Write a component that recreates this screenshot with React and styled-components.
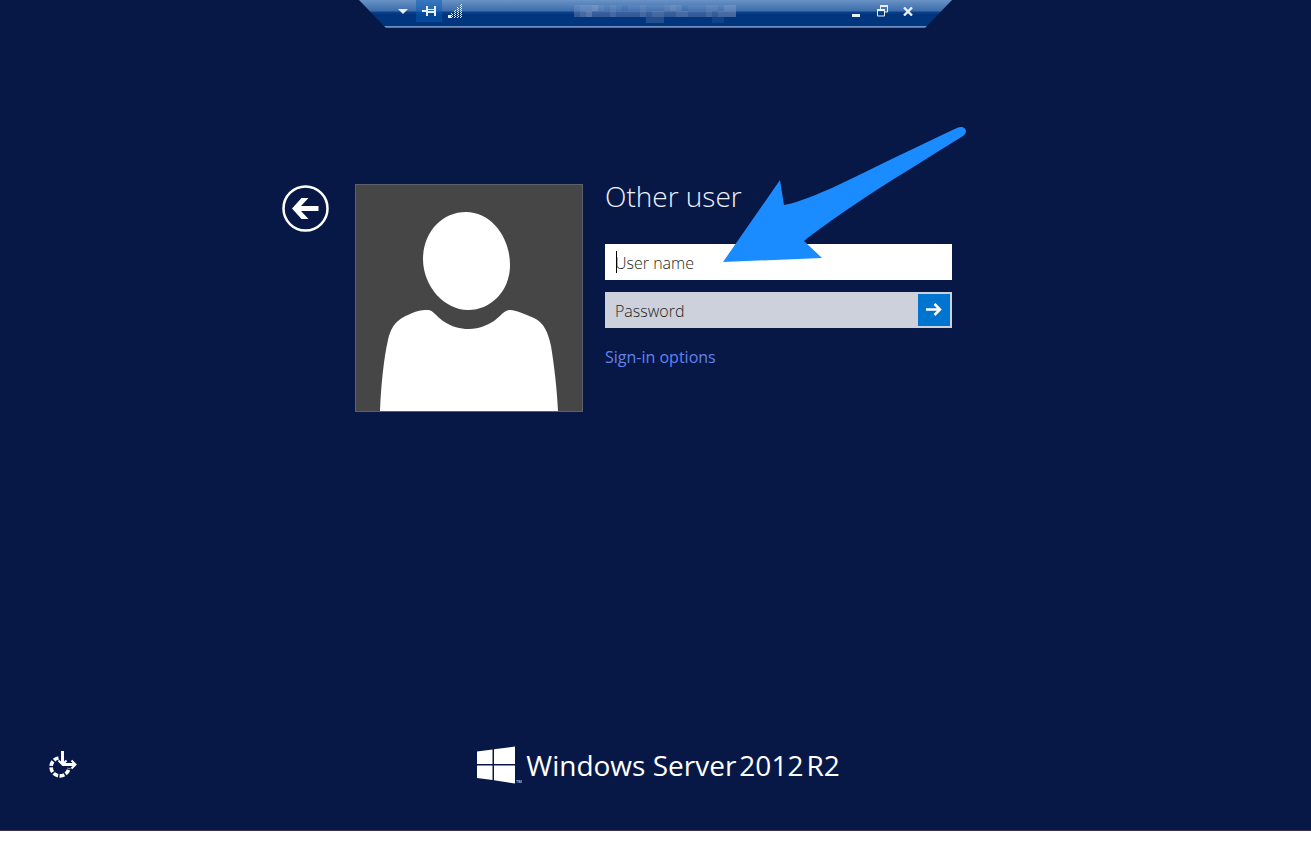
import React from 'react';
import styled, { createGlobalStyle } from 'styled-components';

const GlobalStyle = createGlobalStyle`
  * {
    box-sizing: border-box;
  }

  body {
    margin: 0;
    background: #fff;
    font-family: 'Open Sans', 'Noto Sans', sans-serif;
  }
`;

const Desktop = styled.div`
  display: flex;
  flex-direction: column;
  min-height: calc(100vh - 23px);
  margin-bottom: 23px;
  background: #071846;
  border-bottom: 1px solid #3a3558;
`;

const ConnectionBar = styled.header`
  display: grid;
  grid-template-columns: 1fr auto 1fr;
  align-items: start;
  align-self: center;
  width: 593px;
  max-width: 100%;
  height: 28px;
  padding: 0 31px 0 31px;
  background: linear-gradient(#6a93c6 0, #3c6cab 11px, #0b418b 12px, #01347c 15px, #01377f 26px, #7d9cc8 26px, #45659c 28px);
  clip-path: polygon(0 0, 100% 0, calc(100% - 27px) 100%, 27px 100%);
`;

const BarGroup = styled.div`
  display: flex;
  justify-content: ${props => (props.$end ? 'flex-end' : 'flex-start')};
`;

const BarButton = styled.button`
  display: flex;
  align-items: center;
  justify-content: center;
  width: 26px;
  height: 22px;
  padding: 0;
  border: 0;
  color: #e6effa;
  background: ${props => (props.$active ? 'rgba(8, 92, 184, 0.5)' : 'transparent')};
`;

const Mosaic = styled.svg`
  display: block;
  margin: 5px 0 0 4px;
`;

const Login = styled.main`
  display: flex;
  justify-content: center;
  align-items: flex-start;
  padding: 156px 77px 0 0;
`;

const BackButton = styled.button`
  flex: none;
  width: 48px;
  height: 48px;
  margin-right: 25px;
  padding: 0;
  border: 0;
  background: none;
`;

const Avatar = styled.svg`
  flex: none;
  width: 228px;
  height: 228px;
  margin-right: 22px;
  border: 1px solid #5c6068;
  background: #464646;
`;

const Form = styled.form`
  position: relative;
  display: flex;
  flex-direction: column;
  align-items: stretch;
  gap: 12px;
  width: 347px;
`;

const Title = styled.h1`
  margin: 0 0 24px;
  color: #eef1f8;
  font-size: 28px;
  font-weight: 300;
  line-height: 24px;
`;

const Field = styled.div`
  position: relative;
  display: flex;
  height: 36px;
  padding: 2px;
  background: ${props => (props.$focused ? '#fff' : '#cdd1dc')};
`;

const TextBox = styled.input`
  flex: 1;
  min-width: 0;
  padding: 2px 8px 0;
  border: 0;
  outline: 0;
  color: #333;
  background: transparent;
  font-family: inherit;
  font-size: 16px;
  font-weight: 300;

  &::placeholder {
    color: #1c1e24;
    opacity: 1;
  }
`;

const Caret = styled.span`
  position: absolute;
  top: 7px;
  left: 11px;
  width: 1px;
  height: 22px;
  background: #000;
`;

const SubmitButton = styled.button`
  display: flex;
  align-items: center;
  justify-content: center;
  width: 32px;
  padding: 0;
  border: 0;
  background: #0075cf;
`;

const OptionsLink = styled.a`
  align-self: flex-start;
  margin-top: 5px;
  color: #6283ee;
  font-size: 16px;
  line-height: 24px;
  text-decoration: none;
`;

const Pointer = styled.svg`
  position: absolute;
  top: -60px;
  left: 115px;
  pointer-events: none;
`;

const Footer = styled.footer`
  display: grid;
  grid-template-columns: 1fr auto 1fr;
  align-items: center;
  margin-top: auto;
  padding: 0 48px 45px;
`;

const EaseButton = styled.button`
  display: flex;
  justify-self: start;
  padding: 0;
  border: 0;
  background: none;
`;

const Brand = styled.div`
  display: flex;
  align-items: center;
  padding-left: 6px;
  color: #fff;
`;

const BrandName = styled.div`
  display: flex;
  gap: 3px;
  margin-left: 4px;
  font-size: 28px;
  line-height: 40px;
  white-space: nowrap;
`;

// one digit per 6px block, brightness 0-9
const mosaicRows = [
  '2334212101121112320111221330',
  '3453334333343443344333434440',
  '0000000000002220000000011000',
];

const HiddenHost = () => (
  <Mosaic width="168" height="18" aria-hidden="true" shapeRendering="crispEdges">
    {mosaicRows.map((row, y) =>
      row.split('').map((level, x) => (
        <rect
          key={`${x}-${y}`}
          x={x * 6}
          y={y * 6}
          width="6"
          height="6"
          fill="#a9b4d4"
          opacity={level * 0.1}
        />
      ))
    )}
  </Mosaic>
);

const signalBars = [5, 8, 11, 14];

const TopBar = () => (
  <ConnectionBar>
    <BarGroup>
      <BarButton aria-label="Menu">
        <svg width="10" height="5">
          <path d="M0 0h10L5 5z" fill="currentColor" />
        </svg>
      </BarButton>
      <BarButton aria-label="Pin" $active>
        <svg width="14" height="12" fill="currentColor">
          <path d="M0 5h5v2H0zM4 1h2v10H4zM6 4h6v1H6zM6 6h6v2H6zM12 1h2v10h-2z" />
        </svg>
      </BarButton>
      <BarButton aria-label="Connection quality">
        <svg width="14" height="14" shapeRendering="crispEdges" fill="currentColor">
          <path d="M0 11h3v3H0z" />
          {signalBars.map((size, i) =>
            Array.from({ length: size }, (_, n) => (
              <path key={`${i}-${n}`} d={`M${3 + i * 3 + (n % 2)} ${13 - n}h1v1h-1z`} />
            ))
          )}
        </svg>
      </BarButton>
    </BarGroup>
    <HiddenHost />
    <BarGroup $end>
      <BarButton aria-label="Minimize">
        <svg width="8" height="12">
          <path d="M0 9h8v3H0z" fill="currentColor" />
        </svg>
      </BarButton>
      <BarButton aria-label="Restore">
        <svg width="11" height="12" fill="none" stroke="currentColor">
          <path d="M3 1h8" strokeWidth="2" />
          <path d="M3.500 2v2M10.500 2v5H8" />
          <path d="M0 5h8" strokeWidth="2" />
          <path d="M.5 6v5h7V6" />
        </svg>
      </BarButton>
      <BarButton aria-label="Close">
        <svg width="10" height="9">
          <path d="M1 .5l8 8M9 .5l-8 8" stroke="currentColor" strokeWidth="2.400" />
        </svg>
      </BarButton>
    </BarGroup>
  </ConnectionBar>
);

const EaseOfAccess = () => (
  <EaseButton type="button" aria-label="Ease of access">
    <svg width="30" height="28" fill="none" stroke="#fff">
      <path
        d="M10.500 7A9 9 0 1 0 21 17"
        strokeWidth="3.600"
        strokeDasharray="5 1.500"
      />
      <path d="M14.500 0v13M14.500 13.500h12" strokeWidth="3" />
      <path d="M10.500 9.500l4 4 4-4M23.500 9.500l4 4-4 4" strokeWidth="2" />
    </svg>
  </EaseButton>
);

const WindowsLogo = () => (
  <svg width="45" height="40" fill="#fff" aria-hidden="true">
    <path d="M0 6.500L15.500 4.500V19H0zM17 4.300L38 1.500V19H17zM0 20.500h15.500V35L0 33zM17 20.500h21V38.500L17 35.200z" />
    <text x="39" y="38" fontSize="4">TM</text>
  </svg>
);

const App = () => (
  <>
    <GlobalStyle />
    <Desktop>
      <TopBar />
      <Login>
        <BackButton type="button" aria-label="Back">
          <svg width="48" height="48" fill="none" stroke="#fff">
            <circle cx="23.500" cy="24.500" r="22" strokeWidth="2.500" />
            <path
              d="M10 24.500L19.500 14H26.500L19 22H36.500V27H19L26.500 35H19.500z"
              fill="#fff"
              stroke="none"
            />
          </svg>
        </BackButton>
        <Avatar viewBox="0 0 226 226" fill="#fff" role="img" aria-label="User picture">
          <path d="M110 27C135 27 154 52 154 80C154 106 135 125 112 125C88 125 67 101 67 74C67 47 86 27 110 27z" />
          <path d="M24 226C25 200 28 172 32 155C36 138 43 134 54 129C62 125 68 125 72 125C77 125 80 131 87 136C96 142 104 144 113 144C124 144 131 140 138 136C146 130 148 125 154 125C160 125 168 129 178 133C188 138 192 147 195 161C198 179 201 204 202 226z" />
        </Avatar>
        <Form onSubmit={e => e.preventDefault()}>
          <Title>Other user</Title>
          <Field $focused>
            <TextBox type="text" placeholder="User name" aria-label="User name" />
            <Caret />
          </Field>
          <Field>
            <TextBox type="password" placeholder="Password" aria-label="Password" />
            <SubmitButton aria-label="Sign in">
              <svg width="16" height="14" fill="none" stroke="#fff" strokeWidth="2.500">
                <path d="M0 6.500h14M8.500 1l5.500 5.500L8.500 12" />
              </svg>
            </SubmitButton>
          </Field>
          <OptionsLink href="#options">Sign-in options</OptionsLink>
          <Pointer width="250" height="144" aria-hidden="true">
            <path
              d="M3 138L60 56L64 81C80 78 98 70 114 63C158 42 198 22 238 3.500C245 1 249 8 243 12C208 34 168 58 134 81C112 96 99 105 84 117L102 134z"
              fill="#1a8cff"
            />
          </Pointer>
        </Form>
      </Login>
      <Footer>
        <EaseOfAccess />
        <Brand>
          <WindowsLogo />
          <BrandName>
            <span>Windows Server</span>
            <span>2012</span>
            <span>R2</span>
          </BrandName>
        </Brand>
      </Footer>
    </Desktop>
  </>
);

export default App;
